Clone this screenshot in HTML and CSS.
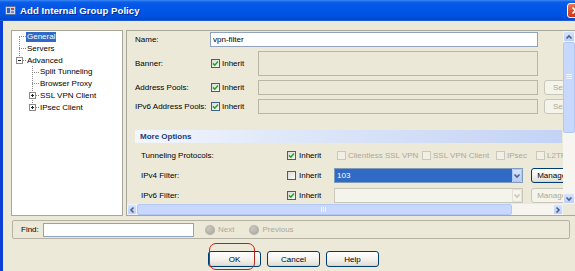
FILE: index.html
```html
<!DOCTYPE html>
<html>
<head>
<meta charset="utf-8">
<title>Add Internal Group Policy</title>
<link rel="stylesheet" href="styles.css">
</head>
<body>
<div class="window">
  <div class="titlebar">
    <svg class="app-icon" width="11" height="11" viewBox="0 0 11 11">
      <rect x="0.5" y="1.5" width="10" height="8" rx="1" fill="#c9d6ea" stroke="#5a6f99"/>
      <rect x="2" y="3" width="3" height="5" fill="#2f62c8"/>
      <rect x="6" y="3" width="3" height="2" fill="#d9402a"/>
      <rect x="6" y="6" width="3" height="2" fill="#7a8fb8"/>
    </svg>
    <span class="title">Add Internal Group Policy</span>
    <span class="close">
      <svg width="9" height="9" viewBox="0 0 9 9"><path d="M1.5 1.5 L7.5 7.5 M7.5 1.5 L1.5 7.5" stroke="#fff" stroke-width="1.6"/></svg>
    </span>
  </div>
  <div class="frame">
    <div class="client">
      <div class="main">
        <div class="tree">
          <div class="node"><span class="g g-first"></span><span class="label sel">General</span></div>
          <div class="node"><span class="g g-tee"></span><span class="label">Servers</span></div>
          <div class="node"><span class="g g-last"><span class="box minus"></span></span><span class="label">Advanced</span></div>
          <div class="node"><span class="g"></span><span class="g g-tee"></span><span class="label">Split Tunneling</span></div>
          <div class="node"><span class="g"></span><span class="g g-tee"></span><span class="label">Browser Proxy</span></div>
          <div class="node"><span class="g"></span><span class="g g-tee"><span class="box plus"></span></span><span class="label">SSL VPN Client</span></div>
          <div class="node"><span class="g"></span><span class="g g-last"><span class="box plus"></span></span><span class="label">IPsec Client</span></div>
        </div>

        <div class="pane">
          <div class="pane-content">
            <div class="form-top">
              <span class="c-lbl">Name:</span>
              <div class="input name-input">vpn-filter</div>

              <span class="c-lbl">Banner:</span>
              <span class="c-inh"><span class="cb"><svg width="7" height="7" viewBox="0 0 7 7"><path d="M1 3.4 L2.8 5.2 L6 1.6" fill="none" stroke="#21a121" stroke-width="1.5"/></svg></span>Inherit</span>
              <div class="c-field field"></div>

              <span class="c-lbl">Address Pools:</span>
              <span class="c-inh"><span class="cb"><svg width="7" height="7" viewBox="0 0 7 7"><path d="M1 3.4 L2.8 5.2 L6 1.6" fill="none" stroke="#21a121" stroke-width="1.5"/></svg></span>Inherit</span>
              <div class="c-field field"></div>
              <span class="c-btn btn disabled">Select...</span>

              <span class="c-lbl">IPv6 Address Pools:</span>
              <span class="c-inh"><span class="cb"><svg width="7" height="7" viewBox="0 0 7 7"><path d="M1 3.4 L2.8 5.2 L6 1.6" fill="none" stroke="#21a121" stroke-width="1.5"/></svg></span>Inherit</span>
              <div class="c-field field"></div>
              <span class="c-btn btn disabled">Select...</span>
            </div>

            <div class="section-head">More Options</div>

            <div class="form-opts">
              <span class="o-lbl">Tunneling Protocols:</span>
              <span class="o-inh"><span class="cb"><svg width="7" height="7" viewBox="0 0 7 7"><path d="M1 3.4 L2.8 5.2 L6 1.6" fill="none" stroke="#21a121" stroke-width="1.5"/></svg></span>Inherit</span>
              <div class="protocols">
                <span class="proto w85"><span class="cb off"></span>Clientless SSL VPN</span>
                <span class="proto w74"><span class="cb off"></span>SSL VPN Client</span>
                <span class="proto w40"><span class="cb off"></span>IPsec</span>
                <span class="proto"><span class="cb off"></span>L2TP/IPsec</span>
              </div>

              <span class="o-lbl">IPv4 Filter:</span>
              <span class="o-inh"><span class="cb"></span>Inherit</span>
              <div class="o-field combo">
                <span class="combo-val">103</span>
                <span class="combo-drop"><svg width="8" height="6" viewBox="0 0 8 6"><path d="M1.5 1.5 L4 4 L6.5 1.5" fill="none" stroke="#4d6185" stroke-width="1.6"/></svg></span>
              </div>
              <span class="o-btn btn">Manage...</span>

              <span class="o-lbl">IPv6 Filter:</span>
              <span class="o-inh"><span class="cb"><svg width="7" height="7" viewBox="0 0 7 7"><path d="M1 3.4 L2.8 5.2 L6 1.6" fill="none" stroke="#21a121" stroke-width="1.5"/></svg></span>Inherit</span>
              <div class="o-field combo off">
                <span class="combo-val"></span>
                <span class="combo-drop"><svg width="8" height="6" viewBox="0 0 8 6"><path d="M1.5 1.5 L4 4 L6.5 1.5" fill="none" stroke="#c9c7ba" stroke-width="1.6"/></svg></span>
              </div>
              <span class="o-btn btn disabled">Manage...</span>
            </div>
          </div>

          <div class="vscroll">
            <span class="sbtn"><svg width="8" height="6" viewBox="0 0 8 6"><path d="M1.5 4.5 L4 2 L6.5 4.5" fill="none" stroke="#4d6185" stroke-width="1.6"/></svg></span>
            <span class="vthumb"></span>
            <span class="vtrack"></span>
            <span class="sbtn"><svg width="8" height="6" viewBox="0 0 8 6"><path d="M1.5 1.5 L4 4 L6.5 1.5" fill="none" stroke="#4d6185" stroke-width="1.6"/></svg></span>
          </div>

          <div class="hscroll">
            <span class="sbtn h"><svg width="6" height="8" viewBox="0 0 6 8"><path d="M4.5 1.5 L2 4 L4.5 6.5" fill="none" stroke="#4d6185" stroke-width="1.6"/></svg></span>
            <span class="hthumb"></span>
            <span class="htrack"></span>
            <span class="sbtn h"><svg width="6" height="8" viewBox="0 0 6 8"><path d="M1.5 1.5 L4 4 L1.5 6.5" fill="none" stroke="#4d6185" stroke-width="1.6"/></svg></span>
          </div>
          <div class="corner"></div>
        </div>
      </div>

      <div class="findbar">
        <span class="find-lbl">Find:</span>
        <div class="input find-input"></div>
        <span class="nav"><span class="nav-dot"></span>Next</span>
        <span class="nav"><span class="nav-dot"></span>Previous</span>
      </div>

      <div class="buttons">
        <span class="ok-wrap">
          <span class="btn dlg">OK</span>
          <span class="annot"></span>
        </span>
        <span class="btn dlg">Cancel</span>
        <span class="btn dlg">Help</span>
      </div>
    </div>
  </div>
</div>
</body>
</html>
```

FILE: styles.css
```css
* { box-sizing: border-box; }

html, body {
  margin: 0;
  padding: 0;
  width: 575px;
  height: 271px;
  overflow: hidden;
  background: #ece9d8;
}

body {
  font-family: "Liberation Sans", Arial, sans-serif;
  font-size: 8px;
  color: #000;
}

.window {
  width: 575px;
  height: 271px;
  display: flex;
  flex-direction: column;
  overflow: hidden;
}

/* ---------- title bar ---------- */
.titlebar {
  height: 21px;
  flex-shrink: 0;
  display: flex;
  align-items: center;
  padding-left: 5px;
  background: linear-gradient(to bottom, #3d8bf5 0px, #0a5ee9 2px, #0457e6 6px, #0055e5 12px, #0050dc 17px, #0046cc 20px, #3a6fd8 21px);
  overflow: hidden;
}

.app-icon { flex-shrink: 0; }

.title {
  margin-left: 4px;
  font-size: 9.6px;
  font-weight: bold;
  color: #fff;
  text-shadow: 1px 1px 0 #0a2a8a;
  letter-spacing: 0.05px;
}

.close {
  margin-left: auto;
  margin-right: -8px;
  flex-shrink: 0;
  width: 16px;
  height: 15px;
  border: 1px solid #fff;
  border-radius: 3px;
  background: linear-gradient(to bottom, #e9775a, #d94a27 60%, #c6381b);
  display: flex;
  align-items: center;
  justify-content: center;
}

/* ---------- frame ---------- */
.frame {
  flex: 1;
  display: flex;
  border-left: 3px solid #0b3fd6;
}

.client {
  flex: 1;
  display: flex;
  flex-direction: column;
  padding: 9px 0 0 8px;
  min-width: 0;
}

.main {
  display: flex;
  height: 186px;
  flex-shrink: 0;
}

/* ---------- tree ---------- */
.tree {
  flex-shrink: 0;
  width: 112px;
  height: 186px;
  background: #fff;
  border: 1px solid #a9a799;
  padding-left: 1px;
  margin-right: 3px;
}

.node {
  display: flex;
  height: 11.75px;
  line-height: 11.75px;
  white-space: nowrap;
}

.g {
  flex-shrink: 0;
  width: 13px;
  height: 100%;
  display: flex;
  align-items: center;
  justify-content: center;
  background-repeat: no-repeat;
}

.g-first, .g-tee, .g-last {
  background-image:
    repeating-linear-gradient(to bottom, #8c8c8c 0 1px, transparent 1px 2px),
    repeating-linear-gradient(to right, #8c8c8c 0 1px, transparent 1px 2px);
}
.g-first {
  background-size: 1px 50%, 7px 1px;
  background-position: 6px 100%, 6px 50%;
}
.g-tee {
  background-size: 1px 100%, 7px 1px;
  background-position: 6px 0, 6px 50%;
}
.g-last {
  background-size: 1px 50%, 7px 1px;
  background-position: 6px 0, 6px 50%;
}

.box {
  width: 7px;
  height: 7px;
  border: 1px solid #8a8a8a;
  background-color: #fff;
  background-repeat: no-repeat;
}
.box.minus {
  background-image: linear-gradient(#222, #222);
  background-size: 3px 1px;
  background-position: 1px 2px;
}
.box.plus {
  background-image: linear-gradient(#222, #222), linear-gradient(#222, #222);
  background-size: 3px 1px, 1px 3px;
  background-position: 1px 2px, 2px 1px;
}

.label { padding: 0 1px; }
.label.sel {
  background: #316ac5;
  color: #fff;
  line-height: 10px;
  height: 10px;
  align-self: center;
}

/* ---------- scroll pane ---------- */
.pane {
  flex-shrink: 0;
  width: 450px;
  height: 186px;
  border: 1px solid #a9a799;
  display: grid;
  grid-template-columns: 436px 12px;
  grid-template-rows: 173px 11px;
  background: #ece9d8;
}

.pane-content {
  overflow: hidden;
  padding-top: 1px;
  white-space: nowrap;
}

.form-top {
  display: grid;
  grid-template-columns: 75px 48px 280px 6px 60px;
  grid-template-rows: 15px 25px 15px 15px;
  row-gap: 4px;
  align-items: center;
  padding-left: 8px;
}

.c-lbl { grid-column: 1; }
.c-inh { grid-column: 2; }
.c-field { grid-column: 3; }
.c-btn { grid-column: 5; }

.name-input { grid-column: 2 / 4; }

.input {
  height: 15px;
  background: #fff;
  border: 1px solid #8fa3bf;
  padding-left: 2px;
  line-height: 13px;
}

.field {
  height: 100%;
  background: #ebe8d8;
  border: 1px solid #b9b6a8;
}

.c-inh, .o-inh {
  display: flex;
  align-items: center;
  gap: 2px;
}
.c-inh { padding-left: 1px; }
.o-inh { gap: 3px; }

.cb {
  flex-shrink: 0;
  width: 9px;
  height: 9px;
  border: 1px solid #3b5f8f;
  background: linear-gradient(135deg, #dcdcd6, #fbfbf9);
  display: inline-flex;
  align-items: center;
  justify-content: center;
}
.cb.off {
  border-color: #cac8bb;
  background: #f1efe6;
}

.btn {
  display: flex;
  align-items: center;
  justify-content: center;
  height: 15px;
  border: 1px solid #003c74;
  border-radius: 3px;
  background: linear-gradient(to bottom, #ffffff, #f4f3ee 50%, #e4e1d6 90%, #d6d0c5);
  color: #000;
}
.btn.disabled {
  border-color: #c9c7ba;
  background: #f5f4ea;
  color: #aca899;
}
.c-btn { width: 50px; justify-content: flex-start; padding-left: 8px; }

/* More options */
.section-head {
  margin: 16px 0 0 8px;
  width: 427px;
  height: 13px;
  line-height: 13px;
  padding-left: 5px;
  font-weight: bold;
  color: #1d3a78;
  background: linear-gradient(to right, #f3f6fc 0%, #dfe8f9 35%, #c3d3f5 100%);
}

.form-opts {
  margin-top: 5px;
  display: grid;
  grid-template-columns: 146px 47px 189px 8px 60px;
  grid-template-rows: 15px 15px 15px;
  row-gap: 5px;
  align-items: center;
  padding-left: 14px;
}

.o-lbl { grid-column: 1; }
.o-inh { grid-column: 2; }
.o-field { grid-column: 3; }
.o-btn { grid-column: 5; width: 48px; }

.protocols {
  grid-column: 3 / 6;
  display: flex;
  align-items: center;
  padding-left: 3px;
  color: #aca899;
}
.proto {
  display: flex;
  align-items: center;
  gap: 2px;
  flex-shrink: 0;
}
.w85 { width: 85px; }
.w74 { width: 74px; }
.w40 { width: 40px; }

.combo {
  height: 15px;
  display: flex;
  border: 1px solid #7f9db9;
  background: #fff;
}
.combo-val {
  flex: 1;
  background: #316ac5;
  color: #fff;
  padding-left: 2px;
  line-height: 13px;
}
.combo-drop {
  width: 10px;
  background: linear-gradient(to bottom, #d6e2fd, #b9cdf8);
  border: 1px solid #b0c6f3;
  border-radius: 1px;
  display: flex;
  align-items: center;
  justify-content: center;
}
.combo.off {
  border-color: #c9c7ba;
  background: #f5f4ea;
}
.combo.off .combo-val { background: transparent; }
.combo.off .combo-drop {
  background: #f5f4ea;
  border-color: #e3e1d5;
}

/* scrollbars */
.vscroll {
  display: flex;
  flex-direction: column;
  background: #f6f5ef;
}
.sbtn {
  flex-shrink: 0;
  width: 12px;
  height: 11px;
  display: flex;
  align-items: center;
  justify-content: center;
  background: linear-gradient(to bottom, #d7e3fd, #bccffa);
  border: 1px solid #eef3fe;
  border-radius: 2px;
}
.sbtn.h { width: 10px; height: 11px; }

.vthumb {
  height: 91px;
  flex-shrink: 0;
  background-color: #c8d8fc;
  border: 1px solid #b4c8f5;
  border-radius: 2px;
  background-image: linear-gradient(#eef3fe, #eef3fe), linear-gradient(#eef3fe, #eef3fe), linear-gradient(#eef3fe, #eef3fe);
  background-size: 6px 1px;
  background-repeat: no-repeat;
  background-position: 2px 31px, 2px 33px, 2px 35px;
}
.vtrack { flex: 1; }

.hscroll {
  display: flex;
  background: #f6f5ef;
}
.hthumb {
  width: 375px;
  flex-shrink: 0;
  background-color: #c8d8fc;
  border: 1px solid #b4c8f5;
  border-radius: 2px;
  background-image: linear-gradient(#eef3fe, #eef3fe), linear-gradient(#eef3fe, #eef3fe), linear-gradient(#eef3fe, #eef3fe);
  background-size: 1px 5px;
  background-repeat: no-repeat;
  background-position: 183px 2px, 185px 2px, 187px 2px;
}
.htrack { flex: 1; }
.corner { background: #ece9d8; }

/* ---------- find bar ---------- */
.findbar {
  margin: 4px 0 0 1px;
  width: 558px;
  height: 19px;
  flex-shrink: 0;
  border: 1px solid #b5b2a3;
  border-radius: 2px;
  display: flex;
  align-items: center;
  padding-left: 8px;
}
.find-lbl { width: 22px; }
.find-input { width: 151px; height: 14px; }
.nav {
  display: flex;
  align-items: center;
  gap: 3px;
  color: #aca899;
}
.findbar .nav:nth-of-type(2) { margin-left: 11px; }
.findbar .nav + .nav { margin-left: 15px; }
.nav-dot {
  width: 10px;
  height: 10px;
  border-radius: 50%;
  background: radial-gradient(circle at 40% 35%, #c9c7bf, #a3a198);
}

/* ---------- dialog buttons ---------- */
.buttons {
  margin-top: 12px;
  display: flex;
  gap: 6px;
  padding-left: 197px;
}
.btn.dlg {
  width: 53px;
  height: 16px;
}
.ok-wrap {
  position: relative;
  display: flex;
}
.annot {
  position: absolute;
  left: 1px;
  top: -8px;
  width: 46px;
  height: 27px;
  border: 1.5px solid #b8231b;
  border-radius: 7px;
}
```
